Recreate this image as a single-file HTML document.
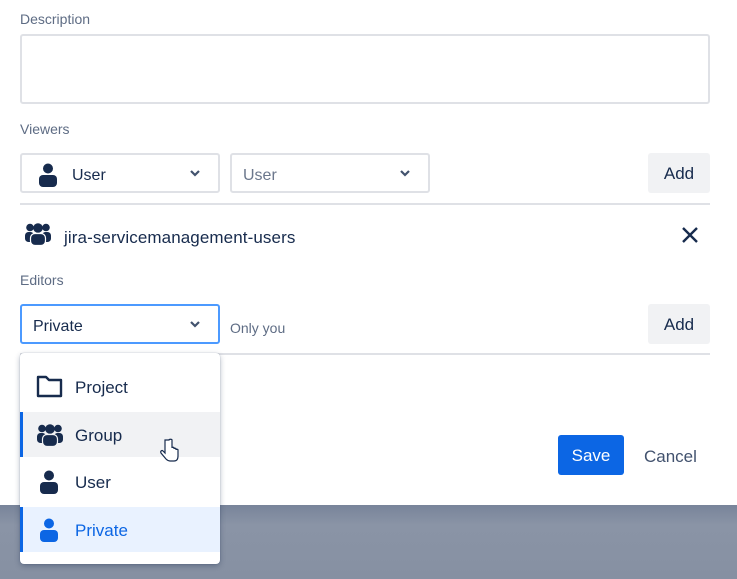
<!DOCTYPE html>
<html><head><meta charset="utf-8"><style>
*{box-sizing:border-box;margin:0;padding:0}
body{width:737px;height:579px;position:relative;overflow:hidden;font-family:"Liberation Sans",sans-serif;background:#fff;color:#172b4d}
.a{position:absolute}
.lbl{font-size:14px;color:#5e6c84}
.sel{position:absolute;border:2px solid #dfe1e6;border-radius:3px;background:#fff;height:40px}
.sel span{position:absolute;top:12px;font-size:16px}
.chev{position:absolute;right:17px;top:14px}
.btn{position:absolute;background:#f1f2f4;border-radius:3px;font-size:17px;text-align:center;line-height:42px;color:#172b4d}
.hr{position:absolute;height:2px;background:#dfe1e6}
.item{position:absolute;left:0;width:200px;height:45px;font-size:17px}
.item span{position:absolute;left:55px;top:14px}
.item svg{position:absolute;left:16px;top:11px}
</style></head><body>
<div class="a" style="left:0;top:505px;width:737px;height:74px;background:linear-gradient(#78849a,#8a94a6 20px,#8690a2)"></div>
<div class="a lbl" style="left:20px;top:11px">Description</div>
<div class="a" style="left:20px;top:34px;width:690px;height:70px;border:2px solid #dfe1e6;border-radius:3px"></div>
<div class="a lbl" style="left:20px;top:121px">Viewers</div>
<div class="sel" style="left:20px;top:153px;width:200px">
<svg class="a" style="left:16px;top:8px" width="20" height="24" viewBox="0 0 20 24"><circle cx="10" cy="5.5" r="5" fill="#172b4d"/><rect x="1" y="12" width="18" height="12" rx="4" fill="#172b4d"/></svg>
<span style="left:50px">User</span>
<svg class="chev" width="12" height="8" viewBox="0 0 12 8"><path d="M2 2l4 4 4-4" stroke="#42526e" stroke-width="2.2" fill="none"/></svg></div>
<div class="sel" style="left:230px;top:153px;width:200px"><span style="left:11px;color:#6b778c">User</span>
<svg class="chev" width="12" height="8" viewBox="0 0 12 8"><path d="M2 2l4 4 4-4" stroke="#42526e" stroke-width="2.2" fill="none"/></svg></div>
<div class="btn" style="left:648px;top:153px;width:62px;height:40px">Add</div>
<div class="hr" style="left:20px;top:203px;width:690px"></div>
<svg class="a" style="left:25px;top:222px" width="26" height="24" viewBox="0 0 26 24"><circle cx="5" cy="5.5" r="3.8" fill="#172b4d"/><circle cx="21" cy="5.5" r="3.8" fill="#172b4d"/><circle cx="13" cy="6" r="4.8" fill="#172b4d"/><rect x="0" y="10" width="9" height="10" rx="3.5" fill="#172b4d"/><rect x="17" y="10" width="9" height="10" rx="3.5" fill="#172b4d"/><rect x="5.5" y="11.5" width="15" height="12" rx="4.5" fill="#172b4d" stroke="#fff" stroke-width="1.2"/></svg>
<div class="a" style="left:64px;top:228px;font-size:17px;letter-spacing:.1px">jira-servicemanagement-users</div>
<svg class="a" style="left:681px;top:226px" width="18" height="18" viewBox="0 0 18 18"><path d="M2 2l14 14M16 2L2 16" stroke="#172b4d" stroke-width="2.4"/></svg>
<div class="a lbl" style="left:20px;top:272px">Editors</div>
<div class="sel" style="left:20px;top:304px;width:200px;border-color:#4c9aff"><span style="left:11px">Private</span>
<svg class="chev" width="12" height="8" viewBox="0 0 12 8"><path d="M2 2l4 4 4-4" stroke="#42526e" stroke-width="2.2" fill="none"/></svg></div>
<div class="a" style="left:230px;top:320px;font-size:14px;color:#5e6c84">Only you</div>
<div class="btn" style="left:648px;top:304px;width:62px;height:40px">Add</div>
<div class="hr" style="left:20px;top:353px;width:690px"></div>
<div class="a" style="left:558px;top:435px;width:66px;height:40px;background:#0c66e4;border-radius:3px;color:#fff;font-size:17px;text-align:center;line-height:42px">Save</div>
<div class="a" style="left:644px;top:447px;font-size:17px;color:#42526e">Cancel</div>
<div class="a" style="left:20px;top:353px;width:200px;height:211px;background:#fff;border-radius:4px;box-shadow:0 2px 6px rgba(9,30,66,.3),0 0 1px rgba(9,30,66,.3);overflow:hidden">
<div class="item" style="top:11px"><svg width="27" height="23" viewBox="0 0 27 23"><path d="M2 2h8l3 3h12v16H2z" fill="none" stroke="#172b4d" stroke-width="2.4" stroke-linejoin="round"/></svg><span>Project</span></div>
<div class="item" style="top:59px;background:#f1f2f4;border-left:3px solid #0c66e4"><svg style="left:14px;top:11px" width="26" height="24" viewBox="0 0 26 24"><circle cx="5" cy="5.5" r="3.8" fill="#172b4d"/><circle cx="21" cy="5.5" r="3.8" fill="#172b4d"/><circle cx="13" cy="6" r="4.8" fill="#172b4d"/><rect x="0" y="10" width="9" height="10" rx="3.5" fill="#172b4d"/><rect x="17" y="10" width="9" height="10" rx="3.5" fill="#172b4d"/><rect x="5.5" y="11.5" width="15" height="12" rx="4.5" fill="#172b4d" stroke="#f1f2f4" stroke-width="1.2"/></svg><span style="left:52px">Group</span>
<svg style="left:137px;top:26px" width="20" height="24" viewBox="0 0 20 24"><path d="M5 2v13l-2-2c-1-1-3 0-2 2l5 6c1 1 2 2 4 2h4c3 0 4-2 4-5v-6c0-1-2-1-2 0v-1c0-1-2-1-2 0v-1c0-1-2-1-2 0V2c0-1-3-1-3 0z" fill="#fff" stroke="#172b4d" stroke-width="1.2"/></svg></div>
<div class="item" style="top:106px"><svg style="left:19px" width="20" height="24" viewBox="0 0 20 24"><circle cx="10" cy="5.5" r="5" fill="#172b4d"/><rect x="1" y="12" width="18" height="12" rx="4" fill="#172b4d"/></svg><span>User</span></div>
<div class="item" style="top:154px;background:#e9f2ff;border-left:3px solid #0c66e4;color:#0c66e4"><svg style="left:16px" width="20" height="24" viewBox="0 0 20 24"><circle cx="10" cy="5.5" r="5" fill="#0c66e4"/><rect x="1" y="12" width="18" height="12" rx="4" fill="#0c66e4"/></svg><span style="left:52px">Private</span></div>
</div>
</body></html>
